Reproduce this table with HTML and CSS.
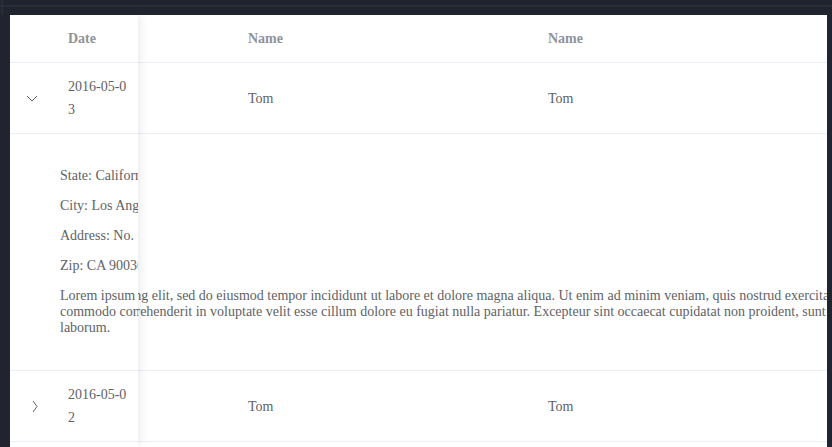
FILE: index.html
```html
<!DOCTYPE html>
<html>
<head>
<meta charset="utf-8">
<link rel="stylesheet" href="styles.css">
</head>
<body>
<div class="chrome"><div class="chrome-rule"></div></div>
<div class="panel">
  <div class="main">
    <div class="row head">
      <div class="cell"></div>
      <div class="cell">Date</div>
      <div class="cell">Name</div>
      <div class="cell">Name</div>
      <div class="cell">Address</div>
    </div>
    <div class="row">
      <div class="cell"></div>
      <div class="cell">2016-05-03</div>
      <div class="cell">Tom</div>
      <div class="cell">Tom</div>
      <div class="cell">No. 189, Grove St, Los Angeles</div>
    </div>
    <div class="expanded">
      <div class="detail">
        <p>State: California</p>
        <p>City: Los Angeles</p>
        <p>Address: No. 189, Grove St, Los Angeles</p>
        <p>Zip: CA 90036</p>
        <p class="lorem">Lorem ipsum dolor sit amet, consectetur adipiscing elit, sed do eiusmod tempor incididunt ut labore et dolore magna aliqua. Ut enim ad minim veniam, quis nostrud exercitation ullamco laboris nisi ut aliquip ex ea<br>commodo consequat. Duis aute irure dolor in reprehenderit in voluptate velit esse cillum dolore eu fugiat nulla pariatur. Excepteur sint occaecat cupidatat non proident, sunt in culpa qui officia deserunt mollit anim id est<br>laborum.</p>
      </div>
    </div>
    <div class="row">
      <div class="cell"></div>
      <div class="cell">2016-05-02</div>
      <div class="cell">Tom</div>
      <div class="cell">Tom</div>
      <div class="cell">No. 189, Grove St, Los Angeles</div>
    </div>
    <div class="row">
      <div class="cell"></div>
      <div class="cell">2016-05-04</div>
      <div class="cell">Tom</div>
      <div class="cell">Tom</div>
      <div class="cell">No. 189, Grove St, Los Angeles</div>
    </div>
  </div>

  <div class="fixed">
    <div class="row head">
      <div class="cell"></div>
      <div class="cell">Date</div>
    </div>
    <div class="row">
      <div class="icon-cell">
        <svg class="chev" width="48" height="20" viewBox="0 0 48 20"><path d="M17 8 L22 13 L27 8"/></svg>
      </div>
      <div class="cell">2016-05-03</div>
    </div>
    <div class="expanded">
      <div class="detail">
        <p>State: California</p>
        <p>City: Los Angeles</p>
        <p>Address: No. 189, Grove St, Los Angeles</p>
        <p>Zip: CA 90036</p>
        <p class="lorem">Lorem ipsum dolor sit amet, consectetur adipiscing elit, sed do eiusmod tempor incididunt ut labore et dolore magna aliqua. Ut enim ad minim veniam, quis nostrud exercitation ullamco laboris nisi ut aliquip ex ea<br>commodo consequat. Duis aute irure dolor in reprehenderit in voluptate velit esse cillum dolore eu fugiat nulla pariatur. Excepteur sint occaecat cupidatat non proident, sunt in culpa qui officia deserunt mollit anim id est<br>laborum.</p>
      </div>
    </div>
    <div class="row">
      <div class="icon-cell">
        <svg class="chev" width="48" height="20" viewBox="0 0 48 20"><path d="M23 5 L27 10.5 L23 16"/></svg>
      </div>
      <div class="cell">2016-05-02</div>
    </div>
    <div class="row">
      <div class="icon-cell">
        <svg class="chev" width="48" height="20" viewBox="0 0 48 20"><path d="M23 5 L27 10.5 L23 16"/></svg>
      </div>
      <div class="cell">2016-05-04</div>
    </div>
  </div>
</div>
</body>
</html>
```

FILE: styles.css
```css
html, body {
  margin: 0;
  height: 100%;
}

body {
  background: #1f242e;
  font-family: "Liberation Serif", "Times New Roman", serif;
  font-size: 14px;
  color: #606266;
  overflow: hidden;
  display: flex;
  flex-direction: column;
}

.chrome {
  flex: none;
  height: 15px;
  box-sizing: border-box;
  padding-top: 5px;
  margin-left: 1px;
  border-left: 2px solid #272d39;
}

.chrome-rule {
  height: 2px;
  margin-left: -3px;
  background: #272d39;
}

.panel {
  flex: 1;
  margin: 0 5px 0 10px;
  background: #fff;
  position: relative;
  overflow: hidden;
}

.row {
  display: grid;
  grid-template-columns: 48px 180px 300px 300px 300px;
  align-items: center;
  height: 71px;
  box-sizing: border-box;
  border-bottom: 1px solid #ebeef5;
}

.row.head {
  height: 48px;
  color: #909399;
  font-weight: bold;
}

.cell {
  padding: 0 10px;
  line-height: 23px;
  word-break: break-all;
  white-space: nowrap;
  overflow: hidden;
}

.fixed .cell {
  white-space: normal;
}

.icon-cell {
  height: 20px;
}

.chev {
  display: block;
}

.chev path {
  fill: none;
  stroke: #606266;
  stroke-width: 1;
}

.expanded {
  padding: 20px 0;
  border-bottom: 1px solid #ebeef5;
  overflow: hidden;
}

.detail {
  padding-left: 50px;
  white-space: nowrap;
}

.detail p {
  margin: 14px 0;
}

.main .detail {
  margin-left: -199px;
}

.fixed {
  position: absolute;
  top: 0;
  left: 0;
  bottom: 0;
  width: 128px;
  background: #fff;
  box-shadow: 0 0 10px rgba(0, 0, 0, 0.12);
  overflow: hidden;
}

.fixed .row {
  grid-template-columns: 48px 80px;
}
```
